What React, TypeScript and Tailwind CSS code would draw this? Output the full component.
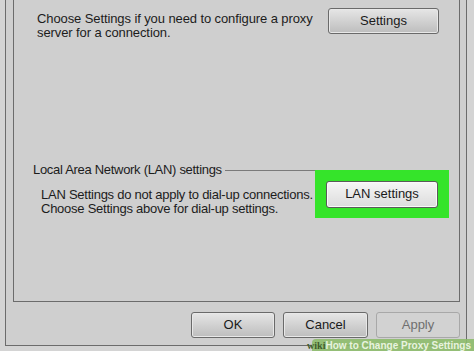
import React from 'react';

const font = { fontFamily: '"Liberation Sans", Arial, sans-serif' };

function WinButton({ label, disabled, focused, className }: { label: string; disabled?: boolean; focused?: boolean; className?: string }) {
  return (
    <div
      className={
        'flex items-center justify-center rounded-[3px] border text-[13px] ' +
        (disabled
          ? 'border-[#a8a8a8] bg-[#d2d2d2] text-[#6f6f6f] '
          : focused
          ? 'border-[#5a5a5a] bg-gradient-to-b from-[#f6f6f6] to-[#dcdcdc] text-[#1a1a1a] shadow-[inset_0_0_0_1px_#fafafa] '
          : 'border-[#6a6a6a] bg-gradient-to-b from-[#e6e6e6] to-[#bdbdbd] text-[#1a1a1a] shadow-[inset_0_0_0_1px_#e8e8e8] ') +
        (className ?? '')
      }
    >
      {label}
    </div>
  );
}

export default function App() {
  return (
    <div className="relative h-[351px] w-[474px] overflow-hidden bg-[#d4d4d4] text-[#1c1c1c]" style={font}>
      {/* outer property sheet frame */}
      <div className="ml-[5px] h-[346px] w-[462px] border-x border-b border-[#6c6c6c] bg-[#cfcfcf] pl-[7px]">
        {/* tab page */}
        <div className="flex h-[302px] w-[447px] flex-col border-x border-b border-[#6c6c6c] bg-[#cfcfcf]">
          <div className="mt-[8px] flex items-start justify-between pl-[23px] pr-[20px]">
            <p className="whitespace-nowrap pt-[4px] text-[13px] leading-[14px] tracking-[-0.1px]">
              Choose Settings if you need to configure a proxy
              <br />
              server for a connection.
            </p>
            <WinButton label="Settings" className="h-[26px] w-[111px]" />
          </div>

          <div className="mt-[123px] flex items-center pl-[19px] pr-[21px]">
            <span className="whitespace-nowrap text-[13px] leading-[14px] tracking-[-0.3px]">Local Area Network (LAN) settings</span>
            <div className="ml-[3px] h-px flex-1 bg-[#7a7a7a]" />
          </div>

          <div className="mt-[-7px] flex items-start justify-between pl-[27px] pr-[10px]">
            <p className="whitespace-nowrap pt-[18px] text-[13px] leading-[14px] tracking-[-0.25px]">
              LAN Settings do not apply to dial-up connections.
              <br />
              Choose Settings above for dial-up settings.
            </p>
            <div className="flex h-[48px] w-[134px] shrink-0 items-center justify-center bg-[#35e42a]">
              <WinButton label="LAN settings" focused className="h-[27px] w-[112px]" />
            </div>
          </div>
        </div>

        <div className="mt-[10px] flex w-[447px] justify-end gap-[8px]">
          <WinButton label="OK" className="h-[26px] w-[84px]" />
          <WinButton label="Cancel" className="h-[26px] w-[85px]" />
          <WinButton label="Apply" disabled className="h-[26px] w-[84px]" />
        </div>
      </div>

      {/* wikiHow watermark */}
      <div className="absolute bottom-0 right-0 flex h-[12px] w-[162px] items-end justify-end rounded-tl-[4px] bg-[#8dbb6c]/90 pr-[3px]">
        <span className="whitespace-nowrap text-[10px] font-bold leading-[11px] text-[#e8f3df]" style={{ fontFamily: '"Liberation Sans", Arial, sans-serif' }}>
          <span className="text-[#3f5c2c]" style={{ fontFamily: '"Liberation Serif", serif' }}>wiki</span>How to Change Proxy Settings
        </span>
      </div>
    </div>
  );
}
